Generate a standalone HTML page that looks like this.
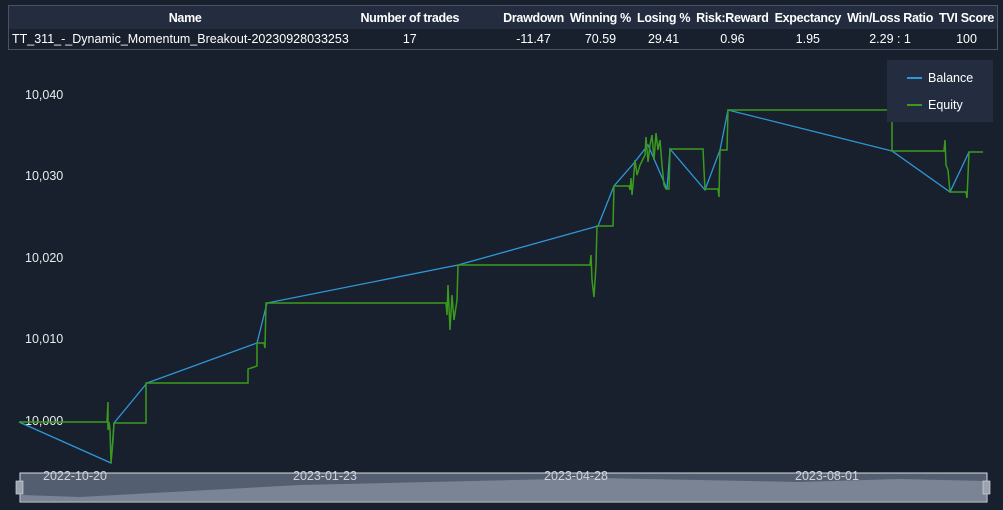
<!DOCTYPE html>
<html><head><style>
body{margin:0;width:1003px;height:510px;background:#18202d;font-family:"Liberation Sans",sans-serif;overflow:hidden;position:relative;color:#fff}
table{position:absolute;left:8px;top:5px;width:990px;border-collapse:collapse;border:1px solid #4a5361;font-size:12.5px}
th{background:#232d3f;font-weight:bold;height:23px;padding:0 3px;white-space:nowrap;letter-spacing:-0.3px}
td{height:20px;text-align:center;padding:0 3px;white-space:nowrap}
.y{position:absolute;left:25px;font-size:12.5px;color:#e8eaee}
.x{position:absolute;top:469px;font-size:12.5px;color:#d0d4da}
</style></head><body>
<table><tr><th style="width:335px;text-align:center;padding-left:10px">Name</th><th style="width:112px">Number of trades</th><th style="width:60px"></th><th>Drawdown</th><th>Winning %</th><th>Losing %</th><th>Risk:Reward</th><th>Expectancy</th><th>Win/Loss Ratio</th><th>TVI Score</th></tr>
<tr><td style="text-align:left">TT_311_-_Dynamic_Momentum_Breakout-20230928033253</td><td>17</td><td></td><td>-11.47</td><td>70.59</td><td>29.41</td><td>0.96</td><td>1.95</td><td>2.29 : 1</td><td>100</td></tr></table>
<div class="y" style="top:88px">10,040</div>
<div class="y" style="top:169px">10,030</div>
<div class="y" style="top:251px">10,020</div>
<div class="y" style="top:332px">10,010</div>
<div class="y" style="top:414px">10,000</div>
<svg width="1003" height="510" style="position:absolute;left:0;top:0">
<polyline fill="none" stroke="#2f97d8" stroke-width="1.3" points="19,422 111,463 114,423 147,383 257,343 267,303 458,265 598,226 614,186 634,163 648,145 667,189 670,149 705,190 720,150 728,110 892,151 950,192 969,152"/>
<polyline fill="none" stroke="#3a9a1e" stroke-width="1.5" points="19,422 107,422 108,402 108,430 109,422 110,430 111,463 113,440 114,423 146,423 146,383 248,383 248,369 257,366 257,343 264,343 265,348 266,303 446,303 447,315 448,285 450,330 452,295 454,320 457,300 458,265 590,265 591,255 592,280 594,297 596,265 597,226 613,226 614,186 629,186 630,190 631,178 632,195 633,185 635,160 637,175 640,165 645,155 646,137 648,162 650,145 652,135 654,160 656,133 658,150 660,140 662,165 664,185 666,189 669,189 670,149 703,149 704,170 705,189 718,189 719,197 720,150 727,150 728,110 892,110 892,151 944,151 945,140 946,165 948,170 950,192 966,192 967,198 968,175 969,152 983,152"/>
<rect x="887" y="60" width="106" height="62" fill="#232d3f"/>
<line x1="907" y1="78" x2="922" y2="78" stroke="#2f97d8" stroke-width="2"/>
<line x1="907" y1="105" x2="922" y2="105" stroke="#3a9a1e" stroke-width="2"/>
<text x="928" y="82" font-size="12.5" fill="#fff" font-family="Liberation Sans">Balance</text>
<text x="928" y="109" font-size="12.5" fill="#fff" font-family="Liberation Sans">Equity</text>
<rect x="20" y="473" width="967" height="29" fill="#535e70" stroke="#d9dde3" stroke-width="1"/>
<path d="M21,495 L80,497 L300,485 L600,478 L800,482 L900,479 L986,481 L986,501 L21,501Z" fill="#7b8494"/>
<rect x="16" y="481" width="7" height="13" fill="#9aa3b0" stroke="#d0d4da" stroke-width="0.7"/>
<rect x="983" y="481" width="7" height="13" fill="#9aa3b0" stroke="#d0d4da" stroke-width="0.7"/>
</svg>
<div class="x" style="left:43px">2022-10-20</div>
<div class="x" style="left:293px">2023-01-23</div>
<div class="x" style="left:544px">2023-04-28</div>
<div class="x" style="left:795px">2023-08-01</div>
</body></html>
